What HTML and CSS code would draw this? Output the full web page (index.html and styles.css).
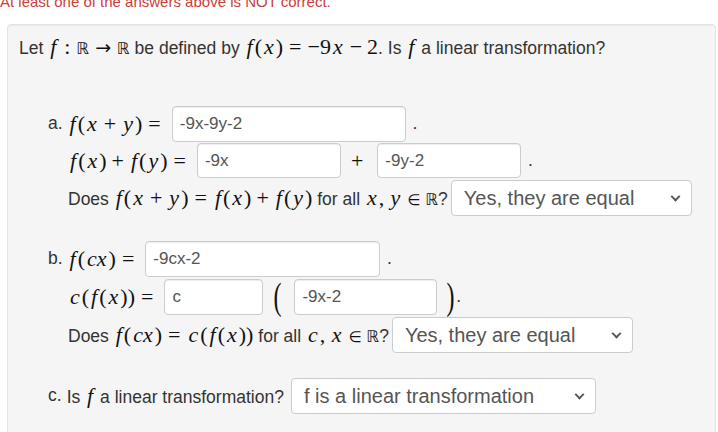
FILE: index.html
```html
<!DOCTYPE html>
<html lang="en">
<head>
    <meta charset="UTF-8">
    <meta name="viewport" content="width=device-width, initial-scale=1.0">
    <title>Linear Transformation</title>
    <link rel="stylesheet" href="styles.css">
</head>
<body>

    <p class="alert">At least one of the answers above is NOT correct.</p>

    <div class="well">
        <p class="intro">Let <span class="m"><i>f</i><span class="rel">:</span><span class="bb">ℝ</span><span class="rel to">→</span><span class="bb">ℝ</span></span> be defined by <span class="m"><i>f</i>(<i>x</i>)<span class="rel">=</span>−9<i>x</i><span class="op">−</span>2</span>. Is <span class="m"><i>f</i></span> a linear transformation?</p>

        <!-- Part a: additivity -->
        <div class="part">
            <div class="line">
                <span class="tag">a.</span>
                <span class="m lhs"><i>f</i>(<i>x</i><span class="op">+</span><i>y</i>)<span class="rel">=</span></span>
                <input class="ans" style="width: 234px" value="-9x-9y-2">
                <span class="dot">.</span>
            </div>
            <div class="line indent">
                <span class="m lhs"><i>f</i>(<i>x</i>)<span class="op">+</span><i>f</i>(<i>y</i>)<span class="rel">=</span></span>
                <input class="ans short" style="width: 144px" value="-9x">
                <span class="m plus">+</span>
                <input class="ans short" style="width: 144px" value="-9y-2">
                <span class="dot">.</span>
            </div>
            <div class="line indent">
                <span class="q">Does <span class="m"><i>f</i>(<i>x</i><span class="op">+</span><i>y</i>)<span class="rel">=</span><i>f</i>(<i>x</i>)<span class="op">+</span><i>f</i>(<i>y</i>)</span> for all <span class="m"><i>x</i>,&thinsp;<i>y</i><span class="rel in">∈</span><span class="bb">ℝ</span></span>?</span>
                <span class="pick" style="width: 241px">
                    <select>
                        <option>Yes, they are equal</option>
                        <option>No, they are not equal</option>
                    </select>
                </span>
            </div>
        </div>

        <!-- Part b: homogeneity -->
        <div class="part">
            <div class="line">
                <span class="tag">b.</span>
                <span class="m lhs"><i>f</i>(<i>cx</i>)<span class="rel">=</span></span>
                <input class="ans" style="width: 235px" value="-9cx-2">
                <span class="dot">.</span>
            </div>
            <div class="line indent tall">
                <span class="m lhs"><i>c</i>(<i>f</i>(<i>x</i>))<span class="rel">=</span></span>
                <input class="ans" style="width: 99px" value="c">
                <span class="paren">(</span>
                <input class="ans" style="width: 143px" value="-9x-2">
                <span class="paren close">)</span><span class="dot">.</span>
            </div>
            <div class="line indent">
                <span class="q">Does <span class="m"><i>f</i>(<i>cx</i>)<span class="rel">=</span><i>c</i>(<i>f</i>(<i>x</i>))</span> for all <span class="m"><i>c</i>,&thinsp;<i>x</i><span class="rel in">∈</span><span class="bb">ℝ</span></span>?</span>
                <span class="pick" style="width: 241px">
                    <select>
                        <option>Yes, they are equal</option>
                        <option>No, they are not equal</option>
                    </select>
                </span>
            </div>
        </div>

        <!-- Part c: conclusion -->
        <div class="part">
            <div class="line">
                <span class="tag">c.</span>
                <span class="q">Is <span class="m"><i>f</i></span> a linear transformation?</span>
                <span class="pick wide" style="width: 305px">
                    <select>
                        <option>f is a linear transformation</option>
                        <option>f is not a linear transformation</option>
                    </select>
                </span>
            </div>
        </div>
    </div>

</body>
</html>
```

FILE: styles.css
```css
body {
    font-family: 'Liberation Sans', Arial, sans-serif;
    font-size: 17.5px;
    color: #333;
    background: #fff;
    margin: 0;
    overflow: hidden;
}
.alert {
    margin: -7px 0 0 0;
    font-size: 15px;
    line-height: 17px;
    color: #c9403b;
}
.well {
    margin: 14px 2px 0 7px;
    padding: 11px 11px 40px 11px;
    background: #f5f5f5;
    border: 1px solid #e3e3e3;
    border-radius: 4px;
    box-shadow: inset 0 1px 1px rgba(0, 0, 0, 0.05);
}
.intro {
    margin: 0;
    line-height: 22px;
}
/* math in the style of a TeX renderer */
.m {
    font-family: 'Liberation Serif', 'Times New Roman', serif;
    font-size: 22px;
    color: #111;
    white-space: nowrap;
}
.m i {
    font-style: italic;
    padding: 0 2px;
}
.bb {
    font-family: 'DejaVu Sans', sans-serif;
    font-size: 16px;
}
.op {
    margin: 0 5px;
}
.rel {
    margin: 0 6px;
}
.rel.to {
    font-family: 'DejaVu Sans', sans-serif;
    font-size: 19px;
    margin: 0 6px;
}
.rel.in {
    font-family: 'DejaVu Sans', sans-serif;
    font-size: 15px;
    margin: 0 5px;
}
.part {
    padding-left: 29px;
    margin-top: 24px;
}
.part:first-of-type {
    margin-top: 45px;
}
.line {
    display: flex;
    align-items: center;
    height: 37px;
    white-space: nowrap;
}
.line.tall {
    height: 39px;
}
.indent {
    padding-left: 20px;
}
.tag {
    margin-right: 5px;
}
.lhs {
    margin-right: 5px;
}
.ans {
    box-sizing: border-box;
    height: 36px;
    padding: 0 7px;
    font-family: 'Liberation Sans', Arial, sans-serif;
    font-size: 17px;
    color: #555;
    background: #fff;
    border: 1px solid #ccc;
    border-radius: 4px;
    box-shadow: inset 0 1px 1px rgba(0, 0, 0, 0.075);
    outline: none;
}
.ans.short {
    height: 35px;
}
.dot {
    margin-left: 7px;
    font-family: 'Liberation Serif', serif;
}
.plus {
    margin: 0 14px 0 10px;
}
.paren {
    display: inline-block;
    font-family: 'Liberation Serif', serif;
    font-size: 24px;
    line-height: 1;
    color: #111;
    transform: scaleY(1.55);
    margin: 0 13px 0 10px;
}
.paren.close {
    margin: 0 0 0 9px;
}
.paren.close + .dot {
    margin-left: 2px;
}
.pick {
    position: relative;
    display: inline-block;
    margin-left: 3px;
}
.pick.wide {
    margin-left: 7px;
}
.pick select {
    appearance: none;
    -webkit-appearance: none;
    box-sizing: border-box;
    width: 100%;
    height: 36px;
    padding: 0 30px 0 12px;
    font-family: 'Liberation Sans', Arial, sans-serif;
    font-size: 20px;
    color: #555;
    background: #fff;
    border: 1px solid #ccc;
    border-radius: 4px;
    outline: none;
}
.pick::after {
    content: "";
    position: absolute;
    right: 13px;
    top: 50%;
    width: 5px;
    height: 5px;
    border-right: 2px solid #555;
    border-bottom: 2px solid #555;
    transform: translateY(-70%) rotate(45deg);
    pointer-events: none;
}
```
